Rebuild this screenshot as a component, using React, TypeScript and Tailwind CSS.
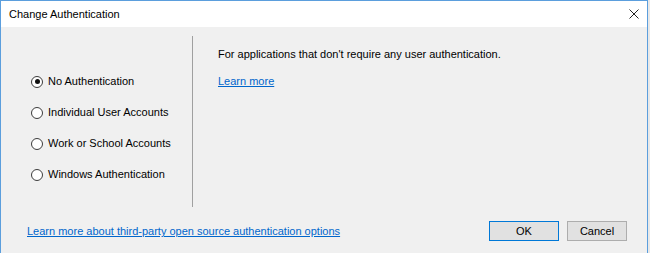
import { useState } from 'react';

const options = [
  'No Authentication',
  'Individual User Accounts',
  'Work or School Accounts',
  'Windows Authentication',
];

function Radio({ checked }: { checked: boolean }) {
  return (
    <span className="w-[12px] h-[12px] rounded-full border border-[#3c3c3c] bg-white flex items-center justify-center shrink-0">
      {checked && <span className="w-[5px] h-[5px] rounded-full bg-[#111]" />}
    </span>
  );
}

export default function App() {
  const [selected, setSelected] = useState(0);

  return (
    <div
      className="w-[650px] h-[253px] bg-[#e8e8e8] overflow-hidden text-[11px] text-black"
      style={{ fontFamily: '"Liberation Sans", Arial, sans-serif' }}
    >
      <div className="w-[648px] h-[253px] border-l border-t border-r border-[#5b9edd] bg-[#f0f0f0] flex flex-col">
        {/* title bar */}
        <div className="h-[26px] bg-white flex items-center justify-between pl-[8px] pr-[8px]">
          <span className="leading-none">Change Authentication</span>
          <svg width="10" height="10" viewBox="0 0 10 10" className="text-[#222]">
            <path d="M0.5 0.5 L9.5 9.5 M9.5 0.5 L0.5 9.5" stroke="currentColor" strokeWidth="1" />
          </svg>
        </div>

        {/* body */}
        <div className="flex pt-[9px]">
          <div className="w-[192px] h-[171px] border-r border-[#a0a0a0] pl-[30px] pt-[30px] flex flex-col">
            {options.map((o, i) => (
              <label
                key={o}
                className="h-[31px] flex items-center gap-[5px] cursor-default"
                onClick={() => setSelected(i)}
              >
                <Radio checked={selected === i} />
                <span>{o}</span>
              </label>
            ))}
          </div>
          <div className="pl-[25px] pt-[10px] flex flex-col gap-[11px]">
            <p className="leading-[16px]">For applications that don't require any user authentication.</p>
            <a className="leading-[16px] text-[#0066cc] underline w-fit cursor-pointer">Learn more</a>
          </div>
        </div>

        {/* footer */}
        <div className="flex items-center justify-between pl-[26px] pr-[20px] mt-[14px]">
          <a className="text-[#0066cc] underline cursor-pointer leading-[16px]">
            Learn more about third-party open source authentication options
          </a>
          <div className="flex gap-[8px]">
            <button className="w-[70px] h-[20px] bg-[#e1e1e1] border border-[#0078d7] leading-none">OK</button>
            <button className="w-[60px] h-[20px] bg-[#e1e1e1] border border-[#adadad] leading-none">Cancel</button>
          </div>
        </div>
      </div>
    </div>
  );
}
